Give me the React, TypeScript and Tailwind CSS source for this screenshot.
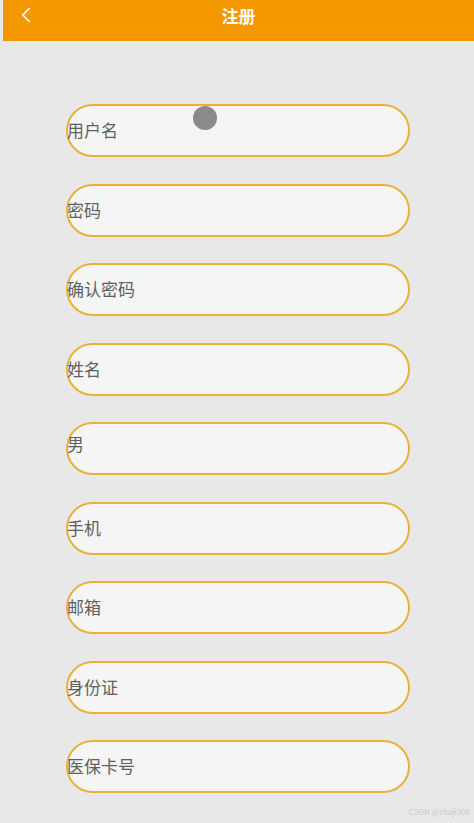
import { ChevronLeft } from 'lucide-react';

const fields = ['用户名', '密码', '确认密码', '姓名', '男', '手机', '邮箱', '身份证', '医保卡号'];

const RegisterPage = () => {
  return (
    <div
      className="relative w-[474px] h-[823px] bg-[#e8e8e8] overflow-hidden"
      style={{ fontFamily: '"Noto Sans CJK SC", "Liberation Sans", sans-serif' }}
    >
      {/* Header */}
      <div className="ml-[3px] h-[41px] bg-[#f39800] flex items-center relative">
        <ChevronLeft className="absolute left-[10px] top-[2px] text-white" size={26} strokeWidth={1.6} />
        <h1 className="flex-1 text-center text-white text-[17px] font-bold -mt-[10px]">注册</h1>
      </div>

      <div className="flex flex-col gap-[26.5px] pt-[63px] pl-[66px]">
        {fields.map((label, index) => (
          <div
            key={index}
            className="w-[344px] h-[53px] rounded-full border-2 border-[#e8b23a] bg-[#f5f5f5] flex items-center"
          >
            <span
              className={
                index === 4
                  ? 'text-[17px] text-[#606060] -ml-[1px] -mt-[10px]'
                  : 'text-[17px] text-[#606060] -ml-[1px] -mt-[1px]'
              }
            >
              {label}
            </span>
          </div>
        ))}
      </div>

      {/* Touch indicator */}
      <div className="absolute left-[193px] top-[106px] w-[24px] h-[24px] rounded-full bg-[#8a8a8a]" />

      {/* Watermark */}
      <div className="absolute right-[4px] bottom-[5px] text-[8px] text-[#c8c8c8]">CSDN @shaji308</div>
    </div>
  );
};

export default RegisterPage;
